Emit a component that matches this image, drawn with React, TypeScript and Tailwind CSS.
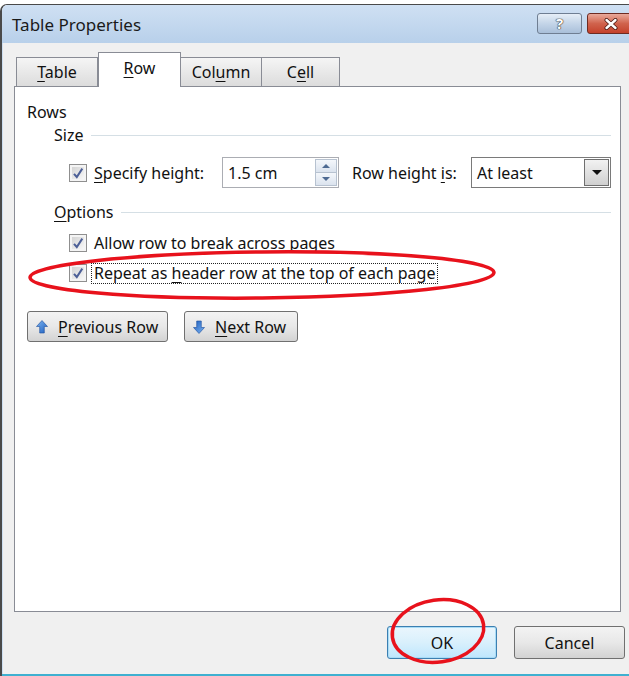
import React from 'react';

const font = { fontFamily: '"Noto Sans", "Open Sans", sans-serif' };

const U: React.FC<{ children: React.ReactNode }> = ({ children }) => (
  <span className="underline decoration-1 underline-offset-[3px]">{children}</span>
);

const CheckBox: React.FC = () => (
  <span className="flex h-[18px] w-[18px] shrink-0 items-center justify-center border border-[#8f8f8f] bg-[#f4f4f4] p-[2px]">
    <span className="flex h-full w-full items-center justify-center bg-gradient-to-br from-[#d4d4d4] to-[#f7f7f7]">
      <svg viewBox="0 0 12 12" className="h-[12px] w-[12px]">
        <path d="M2 6.8 L4.8 10 L10.3 1.6" stroke="#4c5f97" strokeWidth="2" fill="none" />
      </svg>
    </span>
  </span>
);

const Tab: React.FC<{ w: string; active?: boolean; children: React.ReactNode }> = ({ w, active, children }) =>
  active ? (
    <div className={`${w} relative z-10 -mb-px flex h-[35px] items-center justify-center border border-b-0 border-[#898c95] bg-white pb-[4px] text-[16px]`}>
      {children}
    </div>
  ) : (
    <div className={`${w} -ml-px flex h-[29px] items-center justify-center border border-b-0 border-[#898c95] bg-gradient-to-b from-[#f5f5f5] to-[#dcdcdc] text-[16px]`}>
      {children}
    </div>
  );

const Arrow: React.FC<{ down?: boolean }> = ({ down }) => (
  <svg viewBox="0 0 12 14" className={`h-[14px] w-[12px] ${down ? 'rotate-180' : ''}`}>
    <defs>
      <linearGradient id={down ? 'ad' : 'au'} x1="0" y1="0" x2="1" y2="1">
        <stop offset="0" stopColor="#7cb4f0" />
        <stop offset="1" stopColor="#1e5fc0" />
      </linearGradient>
    </defs>
    <path d="M6 0.5 L11.5 6.5 L8.3 6.5 L8.3 13 L3.7 13 L3.7 6.5 L0.5 6.5 Z" fill={`url(#${down ? 'ad' : 'au'})`} stroke="#1d4e9c" strokeWidth="0.6" />
  </svg>
);

export default function App() {
  return (
    <div className="relative h-[676px] w-[629px] overflow-hidden bg-white pt-[4px] text-[#111]" style={font}>
      <div className="flex h-[672px] flex-col overflow-hidden rounded-tl-[7px] border-l-2 border-t border-[#4a4a4a]">
        {/* title bar */}
        <div className="flex h-[38px] shrink-0 items-start bg-gradient-to-b from-[#cfe0f3] to-[#b8d0ea] pl-[10px]">
          <span className="mt-[7px] text-[17px] text-[#1a1a1a]">Table Properties</span>
          <div className="ml-auto mt-[8px] flex gap-[5px]">
            <div className="flex h-[21px] w-[45px] items-center justify-center rounded-[3px] border border-[#6f7e92] bg-gradient-to-b from-[#e6eef7] via-[#c4d5e8] to-[#a9bfd9]">
              <span className="text-[15px] font-bold leading-none text-white [text-shadow:0_0_1px_#333,0_0_1px_#333,0_0_1px_#333]">?</span>
            </div>
            <div className="-mr-[6px] flex h-[21px] w-[48px] items-center justify-center rounded-l-[3px] border border-[#6e2b22] bg-gradient-to-b from-[#e9a99b] via-[#d0634d] to-[#c4402a]">
              <svg viewBox="0 0 14 12" className="h-[12px] w-[14px]">
                <path d="M2.5 2 L11.5 10 M11.5 2 L2.5 10" stroke="#4a1a14" strokeWidth="4" strokeLinecap="round" />
                <path d="M2.5 2 L11.5 10 M11.5 2 L2.5 10" stroke="#fff" strokeWidth="2.4" strokeLinecap="round" />
              </svg>
            </div>
          </div>
        </div>

        {/* body */}
        <div className="flex flex-1 flex-col border-l border-[#cddff2] bg-[#f0f0f0] pl-[11px]">
          {/* tabs */}
          <div className="flex h-[43px] shrink-0 items-end pl-[2px]">
            <div className="flex items-end">
              <div className="ml-px">
                <Tab w="w-[82px]"><span><U>T</U>able</span></Tab>
              </div>
              <Tab w="w-[83px]" active><span><U>R</U>ow</span></Tab>
              <Tab w="w-[82px]"><span>Col<U>u</U>mn</span></Tab>
              <Tab w="w-[79px]"><span>C<U>e</U>ll</span></Tab>
            </div>
          </div>

          {/* panel */}
          <div className="flex h-[526px] w-[607px] shrink-0 flex-col border border-[#898c95] bg-white pl-[12px] pr-[9px] text-[16px]">
            <div className="mt-[15px] h-[20px] leading-[20px]">Rows</div>
            <div className="mt-[3px] flex h-[20px] items-center pl-[27px]">
              <span className="leading-[20px]">Size</span>
              <span className="ml-[8px] h-px flex-1 bg-[#d5dfe5]" />
            </div>

            <div className="mt-[12px] flex h-[31px] items-center pl-[42px]">
              <CheckBox />
              <span className="ml-[7px] w-[128px]"><U>S</U>pecify height:</span>
              <div className="flex h-[31px] w-[117px] items-center border border-[#abadb3] bg-white pl-[5px] pr-[1px]">
                <span>1.5 cm</span>
                <div className="ml-auto flex h-[27px] w-[22px] flex-col">
                  <div className="flex flex-1 items-center justify-center border border-[#b7c2d0] bg-gradient-to-b from-[#f4f7fb] to-[#dbe3ee]">
                    <svg viewBox="0 0 8 4" className="h-[4px] w-[8px]"><path d="M0 4 L4 0 L8 4 Z" fill="#4e6a92" /></svg>
                  </div>
                  <div className="flex flex-1 items-center justify-center border border-t-0 border-[#b7c2d0] bg-gradient-to-b from-[#f4f7fb] to-[#dbe3ee]">
                    <svg viewBox="0 0 8 4" className="h-[4px] w-[8px]"><path d="M0 0 L4 4 L8 0 Z" fill="#4e6a92" /></svg>
                  </div>
                </div>
              </div>
              <span className="ml-[13px] w-[119px]">Row height <U>i</U>s:</span>
              <div className="flex h-[31px] w-[140px] items-center border border-[#7a7a7a] bg-white pl-[5px] pr-[1px]">
                <span>At least</span>
                <div className="ml-auto flex h-[27px] w-[25px] items-center justify-center border border-[#6f6f6f] bg-gradient-to-b from-[#f2f2f2] to-[#d0d0d0]">
                  <svg viewBox="0 0 10 5" className="h-[5px] w-[10px]"><path d="M0 0 L5 5 L10 0 Z" fill="#111" /></svg>
                </div>
              </div>
            </div>

            <div className="mt-[14px] flex h-[20px] items-center pl-[27px]">
              <span className="leading-[20px]"><U>O</U>ptions</span>
              <span className="ml-[8px] h-px flex-1 bg-[#d5dfe5]" />
            </div>

            <div className="mt-[10px] flex h-[22px] items-center pl-[42px]">
              <CheckBox />
              <span className="ml-[7px]">Allow row to brea<U>k</U> across pages</span>
            </div>
            <div className="mt-[8px] flex h-[22px] items-center pl-[42px]">
              <CheckBox />
              <span className="ml-[4px] border border-dotted border-[#222] px-[2px] leading-[19px]">Repeat as <U>h</U>eader row at the top of each page</span>
            </div>

            <div className="mt-[27px] flex gap-[16px]">
              <button className="flex h-[31px] w-[141px] items-center gap-[10px] rounded-[3px] border border-[#707070] bg-gradient-to-b from-[#f3f3f3] via-[#e8e8e8] to-[#d3d3d3] pl-[8px]">
                <Arrow />
                <span><U>P</U>revious Row</span>
              </button>
              <button className="flex h-[31px] w-[114px] items-center gap-[10px] rounded-[3px] border border-[#707070] bg-gradient-to-b from-[#f3f3f3] via-[#e8e8e8] to-[#d3d3d3] pl-[8px]">
                <Arrow down />
                <span><U>N</U>ext Row</span>
              </button>
            </div>
          </div>

          {/* dialog buttons */}
          <div className="mt-[14px] flex justify-end gap-[17px] pr-[4px] text-[16px]">
            <button className="flex h-[33px] w-[110px] items-center justify-center rounded-[3px] border border-[#3c7fb1] bg-gradient-to-b from-[#eaf6fd] via-[#d9f0fc] to-[#bee6fd] shadow-[inset_0_0_0_1px_#a9dcf6]">
              OK
            </button>
            <button className="flex h-[33px] w-[111px] items-center justify-center rounded-[3px] border border-[#707070] bg-gradient-to-b from-[#f3f3f3] via-[#e8e8e8] to-[#d3d3d3]">
              Cancel
            </button>
          </div>
        </div>
        <div className="h-[2px] shrink-0 bg-[#3fb0d0]" />
      </div>
      <div className="h-[2px] w-full bg-[#3a3a3a]" />

      {/* red annotations */}
      <svg className="pointer-events-none absolute left-0 top-0" width="629" height="676">
        <ellipse cx="262" cy="275" rx="232" ry="23" fill="none" stroke="#e8121c" strokeWidth="3.5" transform="rotate(-0.6 262 275)" />
        <ellipse cx="438" cy="631" rx="46" ry="31" fill="none" stroke="#e8121c" strokeWidth="3.5" transform="rotate(-8 438 631)" />
      </svg>
    </div>
  );
}
